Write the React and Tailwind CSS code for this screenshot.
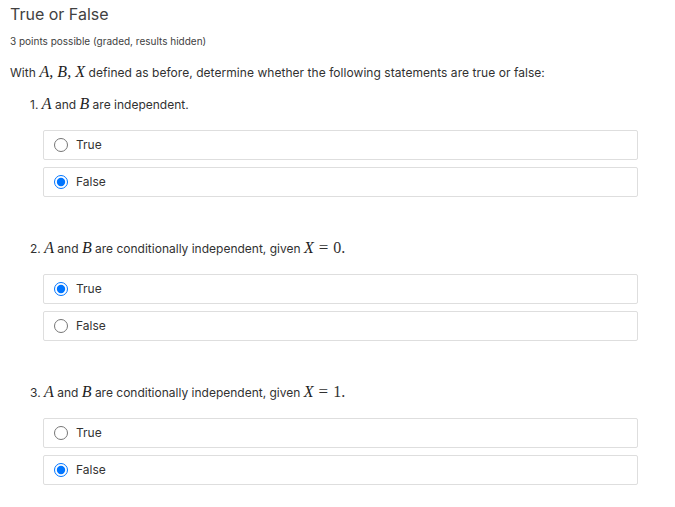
import React from "react";

function Eq({ v }) {
    return (
        <span className="font-['Liberation_Serif',serif] text-[16px] not-italic">
            <span className="mx-[5px] text-[17px]">=</span>{v}.
        </span>
    );
}

const questions = [
    { id: 1, text: <><M>A</M> and <M>B</M> are independent.</>, answer: "False" },
    {
        id: 2,
        text: <><M>A</M> and <M>B</M> are conditionally independent, given <M>X</M><Eq v="0" /></>,
        answer: "True",
    },
    {
        id: 3,
        text: <><M>A</M> and <M>B</M> are conditionally independent, given <M>X</M><Eq v="1" /></>,
        answer: "False",
    },
];

function M({ children }) {
    return <span className="font-['Liberation_Serif',serif] italic text-[16px] text-[#1f1f1f]">{children}</span>;
}

function Option({ label, checked }) {
    return (
        <label className="flex items-center gap-[8px] h-[30px] px-[10px] border border-[#dedede] rounded-[2px] bg-white">
            <input type="radio" checked={checked} readOnly className="w-[14px] h-[14px] m-0 accent-[#0075ff]" />
            <span className="text-[12px] text-[#333]">{label}</span>
        </label>
    );
}

export default function App() {
    return (
        <div className="w-[675px] h-[507px] bg-white font-['Inter',sans-serif] text-[#313131] pl-[10px] pt-[3px]">
            <h2 className="text-[16px] text-[#414141] leading-[22px]">True or False</h2>
            <p className="text-[10px] text-[#414141] mt-[9px] leading-[14px]">3 points possible (graded, results hidden)</p>
            <p className="text-[12px] tracking-[0.05px] mt-[14px] leading-[20px]">
                With <M>A, B, X</M> defined as before, determine whether the following statements are true or false:
            </p>
            <ol className="mt-[11px]">
                {questions.map((q) => (
                    <li key={q.id} className="mb-[41px]">
                        <div className="pl-[20px] text-[12px] leading-[20px]">
                            {q.id}. {q.text}
                        </div>
                        <div className="ml-[33px] w-[595px] mt-[15px] flex flex-col gap-[7px]">
                            <Option label="True" checked={q.answer === "True"} />
                            <Option label="False" checked={q.answer === "False"} />
                        </div>
                    </li>
                ))}
            </ol>
        </div>
    );
}
